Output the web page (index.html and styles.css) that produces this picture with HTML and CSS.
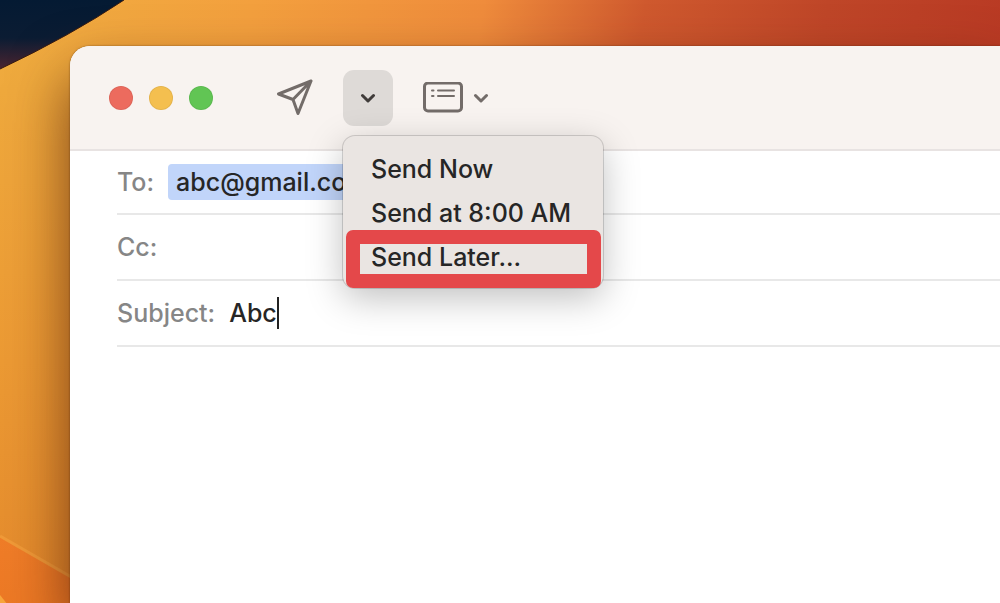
FILE: index.html
```html
<!DOCTYPE html>
<html lang="en">
<head>
    <meta charset="UTF-8">
    <meta name="viewport" content="width=device-width, initial-scale=1">
    <title>Abc</title>
    <link rel="stylesheet" href="styles.css">
</head>
<body>
    <!-- Desktop wallpaper -->
    <svg class="wallpaper" aria-hidden="true">
        <defs>
            <linearGradient id="night" x1="0" y1="0" x2="0" y2="1">
                <stop offset="0" stop-color="#041a33"/>
                <stop offset="0.55" stop-color="#0b1c33"/>
                <stop offset="1" stop-color="#4a2430"/>
            </linearGradient>
            <linearGradient id="ridge" x1="0" y1="0" x2="0" y2="1">
                <stop offset="0" stop-color="#f07d28"/>
                <stop offset="1" stop-color="#e87420"/>
            </linearGradient>
        </defs>
        <path d="M0 0H124Q70 36 0 69Z" fill="url(#night)"/>
        <path d="M124 0Q70 36 0 69" fill="none" stroke="#3a1c10" stroke-width="1"/>
        <path d="M0 536L120 605V700H0Z" fill="url(#ridge)"/>
        <path d="M0 536L120 605" fill="none" stroke="#f09a38" stroke-width="3"/>
        <path d="M0 595L12 610H0Z" fill="#f8a63c"/>
    </svg>

    <main class="window">
        <header class="toolbar">
            <div class="lights">
                <button class="light red" aria-label="Close"></button>
                <button class="light yellow" aria-label="Minimize"></button>
                <button class="light green" aria-label="Zoom"></button>
            </div>

            <button class="tool send" aria-label="Send">
                <svg width="38" height="38" viewBox="0 0 38 38">
                    <path d="M35 2L2.500 15L17 20.500L22 34.500ZM35 2L17 20.500"/>
                </svg>
            </button>

            <div class="dropdown">
                <button class="tool toggle" aria-label="Send options">
                    <svg class="chevron" width="16" height="10" viewBox="0 0 16 10">
                        <path d="M2.500 2.500L8 8L13.500 2.500"/>
                    </svg>
                </button>
                <div class="menu">
                    <button class="menu-item">Send Now</button>
                    <button class="menu-item">Send at 8:00 AM</button>
                    <button class="menu-item">Send Later...</button>
                    <div class="highlight"></div>
                </div>
            </div>

            <button class="tool fields" aria-label="Header fields">
                <svg width="40" height="32" viewBox="0 0 40 32">
                    <rect x="1.500" y="1" width="37" height="28" rx="3.500"/>
                    <path class="thin" d="M9 8.500H10.500M15 8.500H31M9 14H10.500M15 14H31"/>
                </svg>
                <svg class="chevron" width="16" height="10" viewBox="0 0 16 10">
                    <path d="M2.500 2.500L8 8L13.500 2.500"/>
                </svg>
            </button>
        </header>

        <form class="headers">
            <div class="row">
                <label for="to">To:</label>
                <button type="button" class="token">abc@gmail.com</button>
                <input id="to" type="text">
            </div>
            <div class="row">
                <label for="cc">Cc:</label>
                <input id="cc" type="text">
            </div>
            <div class="row">
                <label for="subject">Subject:</label>
                <input id="subject" class="subject" type="text" value="Abc">
                <span class="caret"></span>
            </div>
        </form>
    </main>
</body>
</html>
```

FILE: styles.css
```css
* { box-sizing: border-box; }
body {
    margin: 0;
    min-height: 100vh;
    display: flex;
    padding: 46px 0 0 70px;
    overflow: hidden;
    font-family: Inter, "Liberation Sans", sans-serif;
    font-size: 25px;
    font-weight: 450;
    line-height: 32px;
    color: #262626;
    background:
        linear-gradient(100deg, #f0ae40 0%, #f3a03e 25%, #ef8c3c 48%, #cf592e 64%, #bf4628 82%, #b93a24 100%) top / 100% 60px no-repeat,
        linear-gradient(#f0ae40, #ec9a34 60%, #e48a2c);
}
button, input { font: inherit; color: inherit; border: 0; padding: 0; background: none; }
input { outline: none; min-width: 0; }

.wallpaper { position: absolute; inset: 0; width: 100%; height: 100%; }

.window {
    position: relative;
    flex: 1;
    background: #fff;
    border-radius: 20px 0 0 0;
    box-shadow: 0 0 2px rgba(60, 30, 10, 0.6), 0 30px 60px rgba(80, 30, 10, 0.75);
}

.toolbar {
    display: flex;
    align-items: center;
    height: 105px;
    padding-left: 39px;
    background: #f8f3f0;
    border-bottom: 2px solid #e8e3e2;
    border-radius: 20px 0 0 0;
}
.lights { display: flex; gap: 16px; }
.light { width: 24px; height: 24px; border-radius: 50%; border: 1px solid rgba(0, 0, 0, 0.06); }
.red { background: #ec6b5e; }
.yellow { background: #f4bf4f; }
.green { background: #61c554; }

.tool { display: flex; align-items: center; justify-content: center; }
.tool svg { fill: none; stroke: #736c69; stroke-width: 3; stroke-linecap: round; stroke-linejoin: round; }
.tool .thin { stroke-width: 2; }
.send { margin-left: 63px; }
.dropdown { position: relative; margin: 0 30px 0 29px; }
.toggle { width: 50px; height: 56px; border-radius: 11px; background: #dedad7; }
.toggle .chevron { stroke: #403c3a; }
.fields { gap: 10px; }

.menu {
    position: absolute;
    top: 66px;
    left: 0;
    z-index: 1;
    width: 260px;
    padding: 11px 0 9px;
    background: #eae5e2;
    border-radius: 12px;
    box-shadow: 0 0 0 1px rgba(0, 0, 0, 0.15), 0 10px 36px rgba(0, 0, 0, 0.25);
}
.menu-item { display: block; width: 100%; padding: 6px 28px; text-align: left; white-space: nowrap; }
.highlight {
    position: absolute;
    left: 3px;
    right: 2px;
    bottom: 0;
    height: 58px;
    border: 14px solid #e4484a;
    border-radius: 7px;
    pointer-events: none;
}

.headers { margin-left: 47px; }
.row { display: flex; align-items: center; height: 66px; border-bottom: 2px solid #e8e8e8; }
.row:first-child { height: 64px; }
.row label { color: #868686; }
.row input { flex: 1; margin-left: 14px; }
.token { height: 36px; margin-left: 14px; padding: 0 8px; background: #c1d5fa; border-radius: 4px; }
.row .subject { flex: none; field-sizing: content; }
.caret { width: 2px; height: 32px; background: #222; }
```
